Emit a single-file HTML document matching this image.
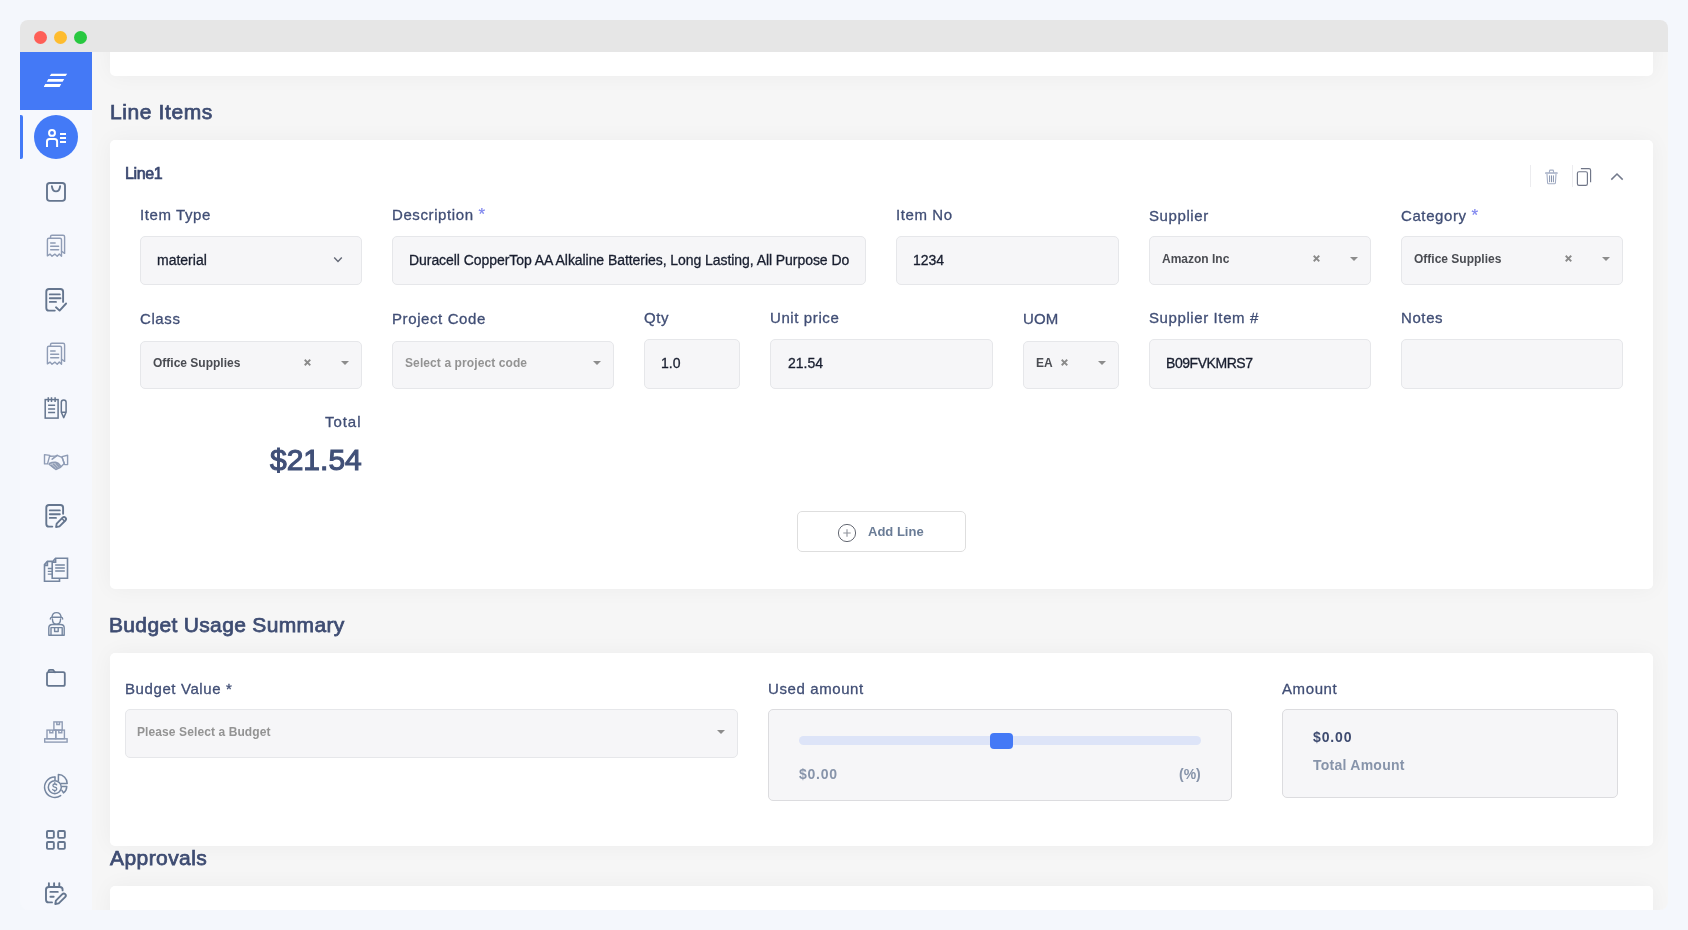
<!DOCTYPE html>
<html><head><meta charset="utf-8">
<style>
*{box-sizing:border-box;margin:0;padding:0}
html,body{width:1688px;height:930px;overflow:hidden;background:#f4f7fc;font-family:"Liberation Sans",sans-serif;position:relative}
.a{position:absolute;white-space:nowrap;line-height:1;will-change:transform}
#title{position:absolute;left:20px;top:20px;width:1648px;height:32px;background:#e6e6e6;border-radius:8px 8px 0 0}
.dot{position:absolute;top:30.5px;width:13px;height:13px;border-radius:50%}
#side{position:absolute;left:20px;top:52px;width:72px;height:858px;background:#f6f8fd;border-radius:0 0 0 8px}
#logo{position:absolute;left:20px;top:52px;width:72px;height:58px;background:#4479f6}
#clip{position:absolute;left:0;top:0;width:1688px;height:930px;clip-path:inset(52px 20px 20px 92px round 0 0 8px 0)}
#content{position:absolute;left:92px;top:52px;width:1576px;height:858px;background:#f6f6f6}
.card{position:absolute;background:#fff;border-radius:5px;box-shadow:0 0 22px rgba(0,0,0,0.045)}
.h{font-size:21px;font-weight:400;color:#3e4c72;-webkit-text-stroke:0.75px #3e4c72}
.h2{font-size:16px;font-weight:400;color:#3b4870;-webkit-text-stroke:0.7px #3b4870}
.lbl{font-size:15px;letter-spacing:0.6px;color:#404e75;-webkit-text-stroke:0.3px #404e75}
.req{color:#7f86ee;font-size:17px;line-height:0;-webkit-text-stroke:0.2px #7f86ee}
.box{position:absolute;background:#f6f6f8;border:1px solid #e6e7ea;border-radius:5px}
.val{font-size:14px;color:#181e2f;-webkit-text-stroke:0.3px #181e2f}
.sel{font-size:12px;font-weight:700;color:#4a4c52}
.ph{font-size:12px;font-weight:700;color:#939393;letter-spacing:0.1px}
.tot{font-size:30px;font-weight:400;color:#415078;-webkit-text-stroke:1.1px #415078}
.btn{font-size:13px;font-weight:700;color:#6a7c96}
.sub{font-size:14px;font-weight:700;color:#8794aa}
.amt{font-size:14px;font-weight:700;color:#3e4b70}
</style></head>
<body>
<div id="title"></div>
<div class="dot" style="left:33.5px;background:#fe5f57"></div>
<div class="dot" style="left:53.5px;background:#febc2e"></div>
<div class="dot" style="left:73.5px;background:#28c840"></div>
<div id="side"></div>
<div id="logo"></div>
<svg class="a" style="left:44px;top:72px" width="24" height="16" viewBox="0 0 24 16">
  <path d="M7.3 1.7H23.2L21.6 4H5.7Z M4.3 7H20.2L18.6 9.7H2.7Z M1.3 11.9H17.2L15.6 14.9H-0.3Z" fill="#fff"/>
</svg>
<div class="a" style="left:20px;top:114.5px;width:2.6px;height:44px;background:#437af7;border-radius:0 2px 2px 0"></div>
<div class="a" style="left:34px;top:115px;width:44px;height:44px;border-radius:50%;background:#437af7"></div>
<svg class="a" style="left:40px;top:121px" width="32" height="32" viewBox="0 0 32 32" fill="none" stroke-linecap="round" stroke-linejoin="round"><g stroke="#fff" stroke-width="2" stroke-linecap="butt"><circle cx="12" cy="11.9" r="2.95"/><path d="M7 26V20.5Q7 18 9.5 18H14.6Q17.1 18 17.1 20.5V26"/><path d="M20 12.9H26M20 17H26M20 21H26"/></g></svg>
<svg class="a" style="left:40px;top:176px" width="32" height="32" viewBox="0 0 32 32" fill="none" stroke-linecap="round" stroke-linejoin="round"><g stroke="#65768f" stroke-width="1.9"><rect x="7" y="7" width="18" height="17.9" rx="2.8"/><path d="M11.9 10.3C12.3 13.6 13.8 15.4 16 15.4C18.2 15.4 19.7 13.6 20.1 10.3"/></g></svg>
<svg class="a" style="left:40px;top:230px" width="32" height="32" viewBox="0 0 32 32" fill="none" stroke-linecap="round" stroke-linejoin="round"><g stroke="#8f9cb5" stroke-width="1.4"><path d="M7.4 25.8V9.8Q7.4 8.3 8.9 8.3H20Q21.5 8.3 21.5 9.8V26.2L19.3 24.1L17.2 26.3L14.8 24.1L12 26.2L10 24.1Z"/><path d="M10.5 8.3V6.8Q10.5 5.2 12 5.2H23Q24.6 5.2 24.6 6.8V23.4L21.6 21.2"/><path d="M10.7 13.1H15.1M10.7 16.2H18.6M10.7 19.8H18.6" stroke-width="1.5"/></g></svg>
<svg class="a" style="left:40px;top:284px" width="32" height="32" viewBox="0 0 32 32" fill="none" stroke-linecap="round" stroke-linejoin="round"><g stroke="#65768f" stroke-width="1.9"><path d="M14.8 26.6H9Q6.3 26.6 6.3 23.9V7.7Q6.3 5 9 5H20.4Q23.1 5 23.1 7.7V17.9"/><path d="M9.8 10.4H19.8M9.8 14.2H20.5M9.8 17.9H16"/><path d="M16 23.3L19.6 26.6L26.1 19.5"/></g></svg>
<svg class="a" style="left:40px;top:338px" width="32" height="32" viewBox="0 0 32 32" fill="none" stroke-linecap="round" stroke-linejoin="round"><g stroke="#8f9cb5" stroke-width="1.4"><path d="M7.4 25.8V9.8Q7.4 8.3 8.9 8.3H20Q21.5 8.3 21.5 9.8V26.2L19.3 24.1L17.2 26.3L14.8 24.1L12 26.2L10 24.1Z"/><path d="M10.5 8.3V6.8Q10.5 5.2 12 5.2H23Q24.6 5.2 24.6 6.8V23.4L21.6 21.2"/><path d="M10.7 13.1H15.1M10.7 16.2H18.6M10.7 19.8H18.6" stroke-width="1.5"/></g></svg>
<svg class="a" style="left:40px;top:392px" width="32" height="32" viewBox="0 0 32 32" fill="none" stroke-linecap="round" stroke-linejoin="round"><g stroke="#65768f" stroke-width="1.5" stroke-linecap="butt" stroke-linejoin="miter"><rect x="5.2" y="7.6" width="12.9" height="18.5"/><path d="M8.3 5.2V10M11.5 5.2V10M15.1 5.2V10"/><path d="M8.1 13.2H15.1M8.1 17H15.1M8.1 20.6H15.1"/><path d="M21.3 20.3V10.3Q21.3 7.9 23.7 7.9Q26.1 7.9 26.1 10.3V20.3ZM21.3 20.3L23.7 25.6L26.1 20.3" stroke-linejoin="round"/></g></svg>
<svg class="a" style="left:40px;top:446px" width="32" height="32" viewBox="0 0 32 32" fill="none" stroke-linecap="round" stroke-linejoin="round"><g stroke="#8f9cb5" stroke-width="1.4"><path d="M4.5 8.6L9.8 9.4L7.5 17.9H4.5Z"/><path d="M27.6 9.3L22 10.6L24.6 18.6H27.6Z"/><path d="M9.8 10.3L15.8 10L17.2 9.4L21.9 11.3L24.3 17.6L20.5 21.3L15.8 23.5L9 18.2"/><path d="M17.2 9.4L12.2 13.2" stroke-width="1.6"/><path d="M9.5 17.5Q12 16 15.5 16.2Q18.5 16.5 20.8 20.5M11.5 19.6L14.6 22.3M13.6 18.2L17.2 21.9M16.2 17.5L19.2 21" stroke-width="1.5"/></g><path d="M9.6 17.8Q12 16.2 15.5 16.4Q18.7 16.8 20.8 20.7L15.8 23.3Z" fill="#8f9cb5" opacity="0.55"/></svg>
<svg class="a" style="left:40px;top:500px" width="32" height="32" viewBox="0 0 32 32" fill="none" stroke-linecap="round" stroke-linejoin="round"><g stroke="#65768f" stroke-width="1.9"><path d="M12.3 26.6H9Q6.3 26.6 6.3 23.9V7.7Q6.3 5 9 5H20.4Q23.1 5 23.1 7.7V13.7"/><path d="M9.8 10.4H19.8M9.8 14.2H19.8M9.8 17.9H16"/><path d="M16.1 27.1L16.7 23.6L22.6 17.7Q24 16.3 25.4 17.7Q26.8 19.1 25.4 20.5L19.5 26.4Z"/><path d="M21.9 18.5L24.6 21.2" stroke-width="1.5"/></g></svg>
<svg class="a" style="left:40px;top:554px" width="32" height="32" viewBox="0 0 32 32" fill="none" stroke-linecap="round" stroke-linejoin="round"><g stroke="#7586a0" stroke-width="1.6" stroke-linejoin="miter" stroke-linecap="butt"><path d="M12.2 8.1L15.6 4.3H27.5V24.3H12.2Z"/><path d="M15.6 4.3V8.1H12.2"/><path d="M12.2 7.4H7.4L4.5 10.6V27.2H19.5V24.3"/><path d="M7.4 7.4V11.4H4.5"/><path d="M15.2 11H24.8M15.2 14H24.8M15.2 16.9H24.8" stroke-width="1.5"/><path d="M7.8 14.5H12.2M7.8 17.4H12.2M7.8 20.1H12.2" stroke-width="1.4"/></g></svg>
<svg class="a" style="left:40px;top:608px" width="32" height="32" viewBox="0 0 32 32" fill="none" stroke-linecap="round" stroke-linejoin="round"><g stroke="#7586a0" stroke-width="1.4"><path d="M12 9.2Q12.3 4.6 16.5 4.6Q20.7 4.6 21.1 9.2"/><path d="M10.3 11Q10.3 9.2 12 9.2H21Q22.7 9.2 22.7 11"/><path d="M12.4 11Q12.6 16.2 16.5 16.2Q20.4 16.2 20.6 11"/><path d="M8.8 27.2V20Q8.8 16.5 12.5 16.5H20.5Q24.2 16.5 24.2 20V27.2Z"/><path d="M11 27V19.6H22.2V27"/><path d="M14.6 19.6V23.5H18.2V19.6"/></g></svg>
<svg class="a" style="left:40px;top:662px" width="32" height="32" viewBox="0 0 32 32" fill="none" stroke-linecap="round" stroke-linejoin="round"><g stroke="#65768f" stroke-width="1.8"><path d="M7 12Q7 10.2 8.6 10.2H23.2Q24.8 10.2 24.8 12V22.2Q24.8 23.9 23.2 23.9H8.6Q7 23.9 7 22.2Z"/><path d="M8.6 10.2V9Q8.6 7.8 9.8 7.8H13L14.9 10.2"/></g></svg>
<svg class="a" style="left:40px;top:716px" width="32" height="32" viewBox="0 0 32 32" fill="none" stroke-linecap="round" stroke-linejoin="round"><g stroke="#8f9cb5" stroke-width="1.4" stroke-linejoin="miter" stroke-linecap="butt"><rect x="13.9" y="5.9" width="8.3" height="8.2"/><path d="M16.8 5.9V8.5H19.5V5.9"/><rect x="7" y="14.1" width="8.8" height="8.6"/><path d="M9.8 14.1V16.8H12.8V14.1"/><rect x="15.8" y="14.1" width="8.6" height="8.6"/><path d="M18.8 14.1V16.8H21.8V14.1"/><rect x="4.7" y="22.8" width="22.4" height="3.3"/></g></svg>
<svg class="a" style="left:40px;top:770px" width="32" height="32" viewBox="0 0 32 32" fill="none" stroke-linecap="round" stroke-linejoin="round"><g stroke="#7586a0" stroke-width="1.5"><path d="M14.8 7A10.2 10.2 0 1 0 20.65 25.55"/><path d="M15 7V9.9"/><circle cx="14.8" cy="17.2" r="6.5"/><path d="M16.7 14.9Q16.2 14 14.8 14Q12.9 14 12.9 15.5Q12.9 16.9 14.8 17.2Q16.8 17.5 16.8 19Q16.8 20.5 14.8 20.5Q13.2 20.5 12.7 19.5M14.8 12.7V14M14.8 20.5V21.8" stroke-width="1.3"/><path d="M18.4 4.6V10.6M18.4 4.6A8.8 8.8 0 0 1 27.2 13.4H21.2"/><path d="M22 16.5H26.8Q26.5 21 23.5 22.9L21.9 20.4"/></g></svg>
<svg class="a" style="left:40px;top:824px" width="32" height="32" viewBox="0 0 32 32" fill="none" stroke-linecap="round" stroke-linejoin="round"><g stroke="#65768f" stroke-width="1.9"><rect x="6.95" y="6.95" width="6.9" height="6.9" rx="1"/><rect x="18.15" y="6.95" width="6.7" height="6.9" rx="1"/><rect x="6.95" y="17.95" width="6.9" height="6.9" rx="1"/><rect x="18.15" y="17.95" width="6.7" height="6.9" rx="1"/></g></svg>
<svg class="a" style="left:40px;top:878px" width="32" height="32" viewBox="0 0 32 32" fill="none" stroke-linecap="round" stroke-linejoin="round"><g stroke="#65768f" stroke-width="1.9"><path d="M12 24.4H8.7Q6 24.4 6 21.7V11.7Q6 9 8.7 9H19.9Q22.6 9 22.6 11.7V12.4"/><path d="M8.9 5.2V8.5M14.1 5.2V8.5M19.3 5.2V8.5"/><path d="M10.4 13.9H17.8M10.4 18.7H13.7"/><path d="M15.3 26L15.9 22.6L22.3 16.2Q23.8 14.8 25.2 16.2Q26.6 17.7 25.1 19.2L18.7 25.4Z"/></g></svg>
<div id="clip">
<div id="content"></div>
<div class="card" style="left:110px;top:30px;width:1543px;height:46px"></div>
<div class="a h" style="left:110px;top:101.00px;letter-spacing:0.6px">Line Items</div>
<div class="card" style="left:110px;top:140px;width:1543px;height:449px"></div>
<div class="a h" style="left:109px;top:614.00px;letter-spacing:0.34px">Budget Usage Summary</div>
<div class="card" style="left:110px;top:653px;width:1543px;height:193px"></div>
<div class="a h" style="left:110px;top:847.00px;letter-spacing:0.42px">Approvals</div>
<div class="card" style="left:110px;top:886px;width:1543px;height:60px"></div>
</div>
<div class="a h2" style="left:125px;top:166.00px;letter-spacing:-0.35px">Line1</div>
<div class="a" style="left:1530px;top:164.5px;width:1px;height:22px;background:#ececef"></div>
<div class="a" style="left:1572px;top:164.5px;width:1px;height:22px;background:#ececef"></div>
<svg class="a" style="left:1544px;top:168px" width="14" height="17" viewBox="0 0 14 17" fill="none" stroke-linecap="round"><path d="M1.8 5H13" stroke="#a3adc4" stroke-width="1.7"/><path d="M5.5 4.3V3Q5.5 2.1 6.4 2.1H8.6Q9.5 2.1 9.5 3V4.3" stroke="#a3adc4" stroke-width="1.1"/><path d="M3 6.2L3.6 15Q3.7 15.8 4.5 15.8H10.5Q11.3 15.8 11.4 15L12 6.2" stroke="#a3adc4" stroke-width="1.1"/><path d="M5.6 7.8V13.8M7.5 7.8V13.8M9.4 7.8V13.8" stroke="#8793ad" stroke-width="1"/></svg>
<svg class="a" style="left:1575px;top:167px" width="18" height="20" viewBox="0 0 18 20" fill="none"><g stroke="#6f7587" stroke-width="1.15"><path d="M5.9 1.6H14Q15.6 1.6 15.6 3.2V15.2"/><rect x="2.4" y="4.7" width="10" height="13.7" rx="1.6"/></g></svg>
<svg class="a" style="left:1610px;top:172px" width="14" height="9" viewBox="0 0 14 9"><path d="M1.3 7.6L7 2L12.7 7.6" fill="none" stroke="#737a8c" stroke-width="1.5"/></svg>
<div class="a lbl" style="left:140px;top:207.00px;">Item Type</div>
<div class="box" style="left:140px;top:236px;width:222px;height:49px;"></div>
<div class="a val" style="left:157px;top:253.00px;">material</div>
<svg class="a" style="left:333px;top:256px" width="11" height="8" viewBox="0 0 11 8"><path d="M1.2 1.6L5 5.6L8.8 1.6" fill="none" stroke="#646977" stroke-width="1.4"/></svg>
<div class="a lbl" style="left:392px;top:207.00px;">Description <span class="req">*</span></div>
<div class="box" style="left:392px;top:236px;width:474px;height:49px;"></div>
<div class="a val" style="left:409px;top:253.00px;letter-spacing:-0.06px">Duracell CopperTop AA Alkaline Batteries, Long Lasting, All Purpose Do</div>
<div class="a lbl" style="left:896px;top:207.00px;">Item No</div>
<div class="box" style="left:896px;top:236px;width:223px;height:49px;"></div>
<div class="a val" style="left:913px;top:253.00px;">1234</div>
<div class="a lbl" style="left:1149px;top:208.00px;">Supplier</div>
<div class="box" style="left:1149px;top:236px;width:222px;height:49px;"></div>
<div class="a sel" style="left:1162px;top:253.00px;">Amazon Inc</div>
<svg class="a" style="left:1312.5px;top:255.2px" width="7" height="7" viewBox="0 0 7 7"><path d="M1.4 1.4L5.6 5.6M5.6 1.4L1.4 5.6" stroke="#8a8a8a" stroke-width="1.9" stroke-linecap="square"/></svg>
<svg class="a" style="left:1350px;top:257px" width="8" height="4" viewBox="0 0 8 4"><path d="M0 0H8L4 4Z" fill="#8c8c8c"/></svg>
<div class="a lbl" style="left:1401px;top:208.00px;">Category <span class="req">*</span></div>
<div class="box" style="left:1401px;top:236px;width:222px;height:49px;"></div>
<div class="a sel" style="left:1414px;top:253.00px;">Office Supplies</div>
<svg class="a" style="left:1564.9px;top:255.2px" width="7" height="7" viewBox="0 0 7 7"><path d="M1.4 1.4L5.6 5.6M5.6 1.4L1.4 5.6" stroke="#8a8a8a" stroke-width="1.9" stroke-linecap="square"/></svg>
<svg class="a" style="left:1602px;top:257px" width="8" height="4" viewBox="0 0 8 4"><path d="M0 0H8L4 4Z" fill="#8c8c8c"/></svg>
<div class="a lbl" style="left:140px;top:311.00px;">Class</div>
<div class="box" style="left:140px;top:340.5px;width:222px;height:48.5px;"></div>
<div class="a sel" style="left:153px;top:357.00px;">Office Supplies</div>
<svg class="a" style="left:304.2px;top:359.3px" width="7" height="7" viewBox="0 0 7 7"><path d="M1.4 1.4L5.6 5.6M5.6 1.4L1.4 5.6" stroke="#8a8a8a" stroke-width="1.9" stroke-linecap="square"/></svg>
<svg class="a" style="left:341px;top:361px" width="8" height="4" viewBox="0 0 8 4"><path d="M0 0H8L4 4Z" fill="#8c8c8c"/></svg>
<div class="a lbl" style="left:392px;top:311.00px;">Project Code</div>
<div class="box" style="left:392px;top:340.5px;width:222px;height:48.5px;"></div>
<div class="a ph" style="left:405px;top:357.00px;">Select a project code</div>
<svg class="a" style="left:593px;top:361px" width="8" height="4" viewBox="0 0 8 4"><path d="M0 0H8L4 4Z" fill="#8c8c8c"/></svg>
<div class="a lbl" style="left:644px;top:310.00px;">Qty</div>
<div class="box" style="left:644px;top:339px;width:96px;height:49.5px;"></div>
<div class="a val" style="left:661px;top:356.00px;">1.0</div>
<div class="a lbl" style="left:770px;top:310.00px;">Unit price</div>
<div class="box" style="left:770px;top:339px;width:223px;height:49.5px;"></div>
<div class="a val" style="left:788px;top:356.00px;">21.54</div>
<div class="a lbl" style="left:1023px;top:311.00px;letter-spacing:0.1px">UOM</div>
<div class="box" style="left:1023px;top:340.5px;width:96px;height:48.5px;"></div>
<div class="a sel" style="left:1036px;top:357.00px;">EA</div>
<svg class="a" style="left:1060.5px;top:359.3px" width="7" height="7" viewBox="0 0 7 7"><path d="M1.4 1.4L5.6 5.6M5.6 1.4L1.4 5.6" stroke="#8a8a8a" stroke-width="1.9" stroke-linecap="square"/></svg>
<svg class="a" style="left:1098px;top:361px" width="8" height="4" viewBox="0 0 8 4"><path d="M0 0H8L4 4Z" fill="#8c8c8c"/></svg>
<div class="a lbl" style="left:1149px;top:310.00px;">Supplier Item #</div>
<div class="box" style="left:1149px;top:339px;width:222px;height:49.5px;"></div>
<div class="a val" style="left:1166px;top:356.00px;letter-spacing:-0.45px">B09FVKMRS7</div>
<div class="a lbl" style="left:1401px;top:310.00px;">Notes</div>
<div class="box" style="left:1401px;top:339px;width:222px;height:49.5px;"></div>
<div class="a lbl" style="left:325px;top:414.00px;letter-spacing:0.95px">Total</div>
<div class="a tot" style="right:1326.5px;top:445px">$21.54</div>
<div class="a" style="left:797px;top:511px;width:169px;height:41px;border:1px solid #dedede;border-radius:5px;background:#fff"></div>
<svg class="a" style="left:837px;top:523px" width="20" height="20" viewBox="0 0 20 20"><circle cx="10" cy="10" r="8.6" fill="none" stroke="#5d616c" stroke-width="0.95"/><path d="M10 6.3V13.7M6.3 10H13.7" stroke="#8f939c" stroke-width="1.1"/></svg>
<div class="a btn" style="left:868px;top:525.00px;">Add Line</div>
<div class="a lbl" style="left:125px;top:681.00px;">Budget Value *</div>
<div class="box" style="left:125px;top:709px;width:613px;height:49px;"></div>
<div class="a ph" style="left:137px;top:726.00px;">Please Select a Budget</div>
<svg class="a" style="left:717px;top:730px" width="8" height="4" viewBox="0 0 8 4"><path d="M0 0H8L4 4Z" fill="#8c8c8c"/></svg>
<div class="a lbl" style="left:768px;top:681.00px;">Used amount</div>
<div class="box" style="left:768px;top:709px;width:464px;height:92px;border-color:#dcdcdf"></div>
<div class="a" style="left:799px;top:736px;width:402px;height:9px;border-radius:5px;background:#dde4f8"></div>
<div class="a" style="left:990px;top:732.5px;width:23px;height:15.5px;border-radius:4px;background:#4479f6"></div>
<div class="a sub" style="left:799px;top:767.00px;letter-spacing:0.75px">$0.00</div>
<div class="a sub" style="left:1179px;top:767.00px;">(%)</div>
<div class="a lbl" style="left:1282px;top:681.00px;">Amount</div>
<div class="box" style="left:1282px;top:709px;width:336px;height:89px;border-color:#dcdcdf"></div>
<div class="a amt" style="left:1313px;top:730.00px;letter-spacing:0.85px">$0.00</div>
<div class="a sub" style="left:1313px;top:758.00px;letter-spacing:0.25px">Total Amount</div>
</body></html>
